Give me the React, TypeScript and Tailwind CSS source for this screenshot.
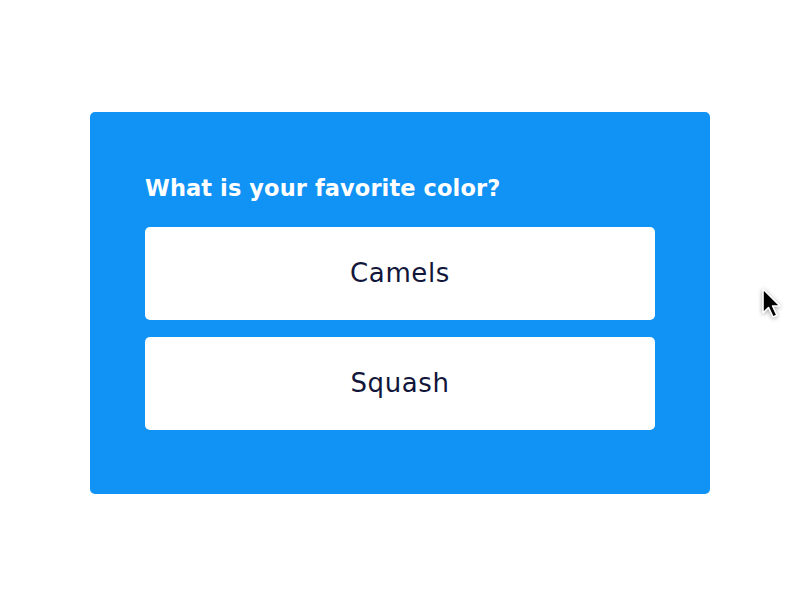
export default function App() {
  const options = ['Camels', 'Squash'];
  return (
    <div className="relative w-[800px] h-[600px] bg-white" style={{ fontFamily: '"DejaVu Sans", "Liberation Sans", sans-serif' }}>
      <div className="flex pt-[112px] pl-[90px]">
        <div className="w-[620px] h-[382px] bg-[#1193f5] rounded-[5px] px-[55px] pt-[61px]">
          <h1 className="text-[22.5px] leading-[30px] font-bold text-white tracking-[0.1px]">What is your favorite color?</h1>
          <div className="flex flex-col gap-[17px] mt-[24px]">
            {options.map((o) => (
              <button key={o} className="h-[93px] w-full bg-white rounded-[5px] flex items-center justify-center text-[26px] tracking-[0.6px] text-[#12163a]">
                {o}
              </button>
            ))}
          </div>
        </div>
      </div>
      <svg className="absolute left-[760px] top-[286px] drop-shadow-[0_1px_2px_rgba(0,0,0,0.35)]" width="26" height="36" viewBox="0 0 26 36">
        <path d="M3 3 L3 27 L8.5 21.5 L13 31 L17 29.3 L12.6 20 L20 20 Z" fill="#000" stroke="#fff" strokeWidth="1.6" strokeLinejoin="round" />
      </svg>
    </div>
  );
}
